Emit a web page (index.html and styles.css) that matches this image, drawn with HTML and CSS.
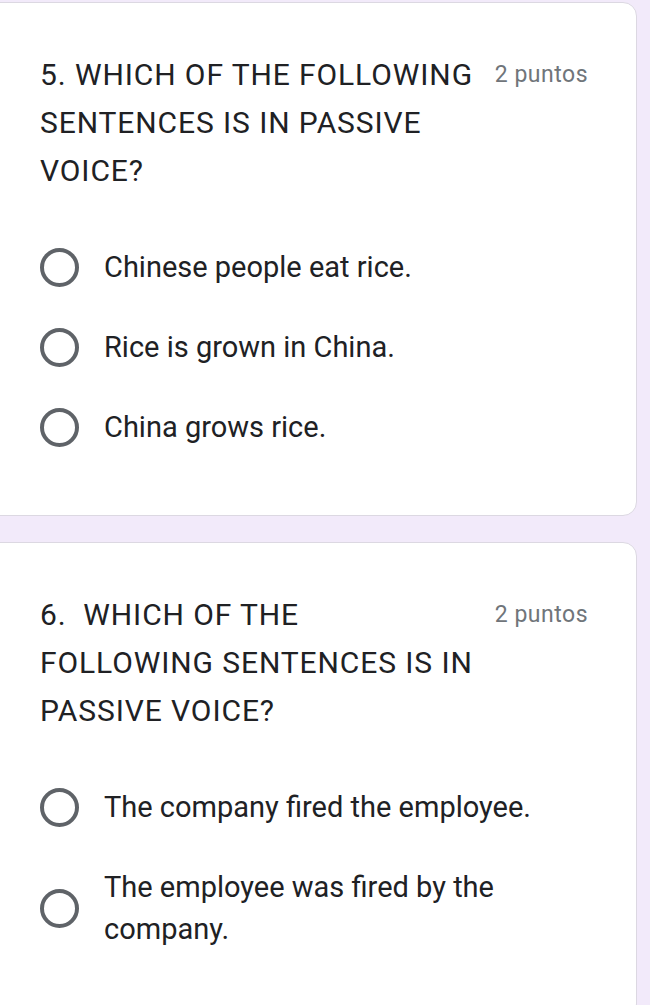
FILE: index.html
```html
<!DOCTYPE html>
<html lang="es">
<head>
    <meta charset="UTF-8">
    <meta name="viewport" content="width=device-width, initial-scale=1.0">
    <title>Formulario</title>
    <link rel="stylesheet" href="styles.css">
</head>
<body>

    <div class="form">
        <div class="question">
            <div class="question-header">
                <div class="question-title">5. WHICH OF THE FOLLOWING SENTENCES IS IN PASSIVE VOICE?</div>
                <div class="question-points">2 puntos</div>
            </div>
            <div class="options">
                <label class="option">
                    <span class="radio"></span>
                    <span class="option-text">Chinese people eat rice.</span>
                </label>
                <label class="option">
                    <span class="radio"></span>
                    <span class="option-text">Rice is grown in China.</span>
                </label>
                <label class="option">
                    <span class="radio"></span>
                    <span class="option-text">China grows rice.</span>
                </label>
            </div>
        </div>

        <div class="question">
            <div class="question-header">
                <div class="question-title">6.&nbsp; WHICH OF THE FOLLOWING SENTENCES IS IN PASSIVE VOICE?</div>
                <div class="question-points">2 puntos</div>
            </div>
            <div class="options">
                <label class="option">
                    <span class="radio"></span>
                    <span class="option-text">The company fired the employee.</span>
                </label>
                <label class="option">
                    <span class="radio"></span>
                    <span class="option-text">The employee was fired by the company.</span>
                </label>
            </div>
        </div>
    </div>

</body>
</html>
```

FILE: styles.css
```css
body {
    margin: 0;
    background-color: #f2eafa;
    font-family: Roboto, "Liberation Sans", sans-serif;
    color: #202124;
    overflow: hidden;
}
.form {
    display: flex;
    flex-direction: column;
    gap: 26px;
    padding-top: 2px;
    width: 657px;
    margin-left: -20px;
}
.question {
    background-color: #fff;
    border: 1px solid #dcd8e2;
    border-radius: 14px;
    padding: 48px 48px 48px 59px;
}
.question-header {
    display: flex;
    align-items: flex-start;
    gap: 20px;
}
.question-title {
    flex: 1;
    font-size: 30px;
    line-height: 48px;
    letter-spacing: 0.9px;
}
.question-points {
    font-size: 23px;
    line-height: 48px;
    letter-spacing: 0.5px;
    color: #70757a;
    white-space: nowrap;
}
.options {
    display: flex;
    flex-direction: column;
    margin-top: 32px;
}
.option {
    display: flex;
    align-items: center;
    gap: 25px;
    padding: 19px 0;
    cursor: pointer;
}
.radio {
    flex: none;
    width: 31px;
    height: 31px;
    border: 4px solid #5f6368;
    border-radius: 50%;
}
.option-text {
    font-size: 29px;
    line-height: 42px;
}
```
